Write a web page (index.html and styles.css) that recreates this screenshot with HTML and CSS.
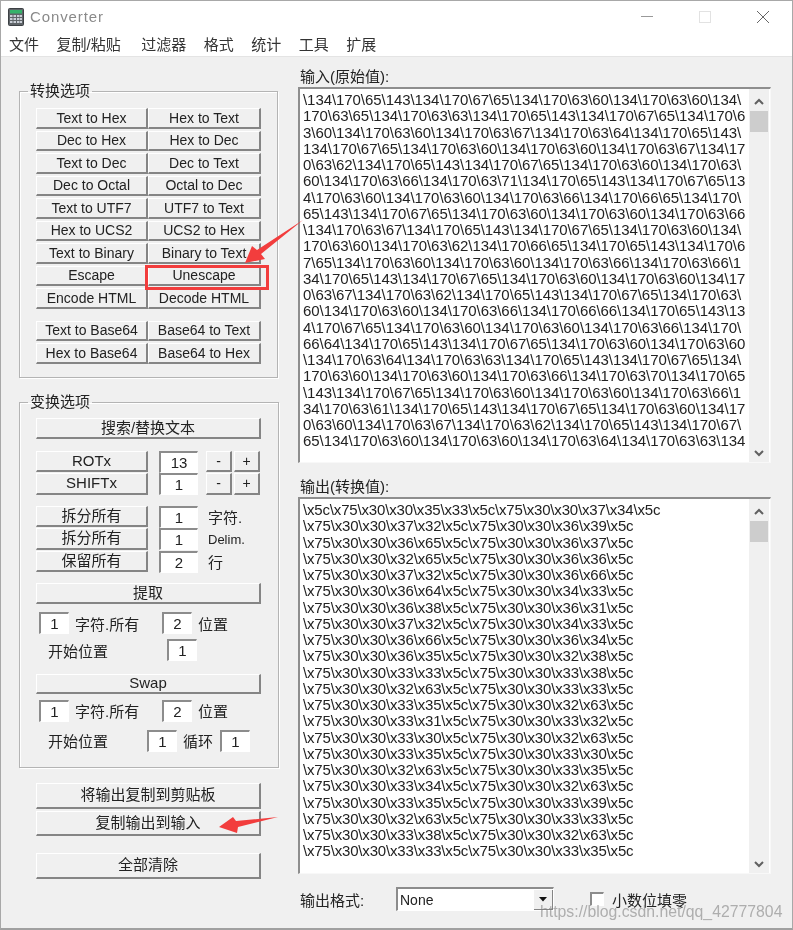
FILE: index.html
```html
<!DOCTYPE html>
<html lang="zh-CN">
<head>
  <meta charset="UTF-8" />
  <title>Converter</title>
  <link rel="stylesheet" href="styles.css">
</head>
<body>
  <div class="window">
    <div class="titlebar">
      <svg class="app-icon" width="16" height="18" viewBox="0 0 16 18">
        <rect x="0.5" y="0.5" width="15" height="17" rx="1" fill="#5f6468" stroke="#3c4044"/>
        <rect x="2" y="2" width="12" height="3.5" fill="#35b26a"/>
        <g fill="#c9ced6">
          <rect x="2" y="7" width="2.5" height="2"/><rect x="5.5" y="7" width="2.5" height="2"/><rect x="9" y="7" width="2.5" height="2"/><rect x="12" y="7" width="2" height="2"/>
          <rect x="2" y="10" width="2.5" height="2"/><rect x="5.5" y="10" width="2.5" height="2"/><rect x="9" y="10" width="2.5" height="2"/><rect x="12" y="10" width="2" height="2"/>
          <rect x="2" y="13" width="2.5" height="2"/><rect x="5.5" y="13" width="2.5" height="2"/><rect x="9" y="13" width="2.5" height="2"/><rect x="12" y="13" width="2" height="2"/>
        </g>
      </svg>
      <span class="title">Converter</span>
      <div class="caption-btns">
        <svg width="12" height="12" viewBox="0 0 12 12"><path d="M0 5.5H12" stroke="#999" fill="none"/></svg>
        <svg width="12" height="12" viewBox="0 0 12 12"><rect x="0.5" y="0.5" width="11" height="11" stroke="#e2e2e2" fill="none"/></svg>
        <svg width="12" height="12" viewBox="0 0 12 12"><path d="M0 0L12 12M12 0L0 12" stroke="#666" fill="none"/></svg>
      </div>
    </div>
    <div class="menubar">
      <span>文件</span><span class="menu-copy">复制/粘贴</span><span>过滤器</span><span>格式</span><span>统计</span><span>工具</span><span>扩展</span>
    </div>

    <div class="main">
      <div class="left">
        <fieldset class="group group-convert">
          <legend>转换选项</legend>
          <div class="btn-grid">
            <button>Text to Hex</button><button>Hex to Text</button>
            <button>Dec to Hex</button><button>Hex to Dec</button>
            <button>Text to Dec</button><button>Dec to Text</button>
            <button>Dec to Octal</button><button>Octal to Dec</button>
            <button>Text to UTF7</button><button>UTF7 to Text</button>
            <button>Hex to UCS2</button><button>UCS2 to Hex</button>
            <button>Text to Binary</button><button>Binary to Text</button>
            <button>Escape</button><button>Unescape</button>
            <button>Encode HTML</button><button>Decode HTML</button>
          </div>
          <div class="btn-grid grid-base64">
            <button>Text to Base64</button><button>Base64 to Text</button>
            <button>Hex to Base64</button><button>Base64 to Hex</button>
          </div>
        </fieldset>

        <fieldset class="group group-transform">
          <legend>变换选项</legend>
          <button class="wide">搜索/替换文本</button>

          <div class="rows rows-rot">
            <div class="row">
              <button class="half">ROTx</button>
              <input class="num" value="13">
              <button class="step">-</button><button class="step">+</button>
            </div>
            <div class="row">
              <button class="half">SHIFTx</button>
              <input class="num" value="1">
              <button class="step">-</button><button class="step">+</button>
            </div>
          </div>

          <div class="rows rows-split">
            <div class="row">
              <button class="half">拆分所有</button>
              <input class="num" value="1">
              <span class="row-label">字符.</span>
            </div>
            <div class="row">
              <button class="half">拆分所有</button>
              <input class="num" value="1">
              <span class="row-label label-delim">Delim.</span>
            </div>
            <div class="row">
              <button class="half">保留所有</button>
              <input class="num" value="2">
              <span class="row-label">行</span>
            </div>
          </div>

          <button class="wide btn-extract">提取</button>
          <div class="field-row first-row">
            <input class="small" value="1"><span class="lbl lbl-chars">字符.所有</span>
            <input class="small" value="2"><span class="lbl">位置</span>
          </div>
          <div class="field-row start-row">
            <span class="lbl-start">开始位置</span><input class="small" value="1">
          </div>

          <button class="wide btn-swap">Swap</button>
          <div class="field-row swap-row">
            <input class="small" value="1"><span class="lbl lbl-chars">字符.所有</span>
            <input class="small" value="2"><span class="lbl">位置</span>
          </div>
          <div class="field-row loop-row">
            <span class="lbl-start">开始位置</span><input class="small" value="1">
            <span class="lbl lbl-loop">循环</span><input class="small" value="1">
          </div>
        </fieldset>

        <div class="actions">
          <button class="wide tall">将输出复制到剪贴板</button>
          <button class="wide tall">复制输出到输入</button>
          <button class="wide tall clear-all">全部清除</button>
        </div>
      </div>

      <div class="right">
        <label class="box-label">输入(原始值):</label>
        <div class="textbox input-box">
<pre class="content">\134\170\65\143\134\170\67\65\134\170\63\60\134\170\63\60\134\
170\63\65\134\170\63\63\134\170\65\143\134\170\67\65\134\170\6
3\60\134\170\63\60\134\170\63\67\134\170\63\64\134\170\65\143\
134\170\67\65\134\170\63\60\134\170\63\60\134\170\63\67\134\17
0\63\62\134\170\65\143\134\170\67\65\134\170\63\60\134\170\63\
60\134\170\63\66\134\170\63\71\134\170\65\143\134\170\67\65\13
4\170\63\60\134\170\63\60\134\170\63\66\134\170\66\65\134\170\
65\143\134\170\67\65\134\170\63\60\134\170\63\60\134\170\63\66
\134\170\63\67\134\170\65\143\134\170\67\65\134\170\63\60\134\
170\63\60\134\170\63\62\134\170\66\65\134\170\65\143\134\170\6
7\65\134\170\63\60\134\170\63\60\134\170\63\66\134\170\63\66\1
34\170\65\143\134\170\67\65\134\170\63\60\134\170\63\60\134\17
0\63\67\134\170\63\62\134\170\65\143\134\170\67\65\134\170\63\
60\134\170\63\60\134\170\63\66\134\170\66\66\134\170\65\143\13
4\170\67\65\134\170\63\60\134\170\63\60\134\170\63\66\134\170\
66\64\134\170\65\143\134\170\67\65\134\170\63\60\134\170\63\60
\134\170\63\64\134\170\63\63\134\170\65\143\134\170\67\65\134\
170\63\60\134\170\63\60\134\170\63\66\134\170\63\70\134\170\65
\143\134\170\67\65\134\170\63\60\134\170\63\60\134\170\63\66\1
34\170\63\61\134\170\65\143\134\170\67\65\134\170\63\60\134\17
0\63\60\134\170\63\67\134\170\63\62\134\170\65\143\134\170\67\
65\134\170\63\60\134\170\63\60\134\170\63\64\134\170\63\63\134</pre>
          <div class="scrollbar">
            <svg class="chevron" width="12" height="8" viewBox="0 0 12 8"><path d="M2 6L6 2L10 6" stroke="#606060" stroke-width="2" fill="none"/></svg>
            <div class="thumb"></div>
            <svg class="chevron chevron-down" width="12" height="8" viewBox="0 0 12 8"><path d="M2 2L6 6L10 2" stroke="#606060" stroke-width="2" fill="none"/></svg>
          </div>
        </div>

        <label class="box-label output-label">输出(转换值):</label>
        <div class="textbox output-box">
<pre class="content">\x5c\x75\x30\x30\x35\x33\x5c\x75\x30\x30\x37\x34\x5c
\x75\x30\x30\x37\x32\x5c\x75\x30\x30\x36\x39\x5c
\x75\x30\x30\x36\x65\x5c\x75\x30\x30\x36\x37\x5c
\x75\x30\x30\x32\x65\x5c\x75\x30\x30\x36\x36\x5c
\x75\x30\x30\x37\x32\x5c\x75\x30\x30\x36\x66\x5c
\x75\x30\x30\x36\x64\x5c\x75\x30\x30\x34\x33\x5c
\x75\x30\x30\x36\x38\x5c\x75\x30\x30\x36\x31\x5c
\x75\x30\x30\x37\x32\x5c\x75\x30\x30\x34\x33\x5c
\x75\x30\x30\x36\x66\x5c\x75\x30\x30\x36\x34\x5c
\x75\x30\x30\x36\x35\x5c\x75\x30\x30\x32\x38\x5c
\x75\x30\x30\x33\x33\x5c\x75\x30\x30\x33\x38\x5c
\x75\x30\x30\x32\x63\x5c\x75\x30\x30\x33\x33\x5c
\x75\x30\x30\x33\x35\x5c\x75\x30\x30\x32\x63\x5c
\x75\x30\x30\x33\x31\x5c\x75\x30\x30\x33\x32\x5c
\x75\x30\x30\x33\x30\x5c\x75\x30\x30\x32\x63\x5c
\x75\x30\x30\x33\x35\x5c\x75\x30\x30\x33\x30\x5c
\x75\x30\x30\x32\x63\x5c\x75\x30\x30\x33\x35\x5c
\x75\x30\x30\x33\x34\x5c\x75\x30\x30\x32\x63\x5c
\x75\x30\x30\x33\x35\x5c\x75\x30\x30\x33\x39\x5c
\x75\x30\x30\x32\x63\x5c\x75\x30\x30\x33\x33\x5c
\x75\x30\x30\x33\x38\x5c\x75\x30\x30\x32\x63\x5c
\x75\x30\x30\x33\x33\x5c\x75\x30\x30\x33\x35\x5c</pre>
          <div class="scrollbar">
            <svg class="chevron" width="12" height="8" viewBox="0 0 12 8"><path d="M2 6L6 2L10 6" stroke="#606060" stroke-width="2" fill="none"/></svg>
            <div class="thumb"></div>
            <svg class="chevron chevron-down" width="12" height="8" viewBox="0 0 12 8"><path d="M2 2L6 6L10 2" stroke="#606060" stroke-width="2" fill="none"/></svg>
          </div>
        </div>

        <div class="format-row">
          <span class="format-label">输出格式:</span>
          <div class="select">
            <span class="select-value">None</span>
            <span class="select-arrow"><svg width="10" height="6" viewBox="0 0 10 6"><path d="M1 1H9L5 5.5Z" fill="#111"/></svg></span>
          </div>
          <span class="checkbox"></span>
          <span class="check-label">小数位填零</span>
        </div>
      </div>
    </div>

    <!-- annotations drawn on top of the screenshot -->
    <svg class="marks" width="793" height="930" viewBox="0 0 793 930">
      <rect x="146.5" y="266.5" width="121" height="22" fill="none" stroke="#f23d3d" stroke-width="3"/>
      <path d="M303 220L261 254L265 259L245 263L252 246L257 250Z" fill="#f23d3d"/>
      <path d="M278 817L236 821L233 817L219 827L237 833L238 827Z" fill="#f23d3d"/>
    </svg>
    <div class="watermark">https://blog.csdn.net/qq_42777804</div>
  </div>
</body>
</html>
```

FILE: styles.css
```css
* {
  box-sizing: border-box;
}
html, body {
  margin: 0;
  padding: 0;
}
body {
  width: 793px;
  height: 930px;
  overflow: hidden;
  font-family: "Liberation Sans", "Noto Sans CJK SC", sans-serif;
  font-size: 14px;
  color: #222;
}
.window {
  position: relative;
  width: 793px;
  height: 930px;
  background: #f0f0f0;
  border: 1px solid #a8a8a8;
  border-bottom: 2px solid #a0a0a0;
  overflow: hidden;
  filter: blur(0.3px);
}
.titlebar {
  display: flex;
  align-items: center;
  height: 31px;
  padding-left: 7px;
  background: #fff;
}
.app-icon {
  flex: none;
}
.title {
  margin-left: 6px;
  font-size: 15px;
  letter-spacing: 0.9px;
  color: #8a8a8a;
}
.caption-btns {
  display: flex;
  gap: 46px;
  margin-left: auto;
  margin-right: 23px;
}
.menubar {
  display: flex;
  gap: 17.5px;
  height: 25px;
  padding: 2px 0 0 8px;
  background: #fff;
  border-bottom: 1px solid #e4e4e4;
  font-size: 15px;
  line-height: 22px;
  color: #333;
}
.menu-copy {
  margin-right: 3px;
}
.main {
  display: flex;
}
.left {
  flex: none;
  width: 297px;
  padding: 26px 0 0 18px;
}
.group {
  width: 259px;
  margin: 0;
  padding: 8px 16px 0 16px;
  border: 1px solid #b4b4b4;
  box-shadow: 1px 1px 0 #fff, inset 1px 1px 0 #fff;
}
.group legend {
  padding: 0 2px;
  margin-left: -8px;
  font-size: 15px;
  line-height: 16px;
}
button {
  display: block;
  padding: 0;
  height: 20.5px;
  background: #f0f0f0;
  border: 1px solid #fff;
  border-right: 2px solid #858585;
  border-bottom: 2px solid #858585;
  border-radius: 0;
  font-family: inherit;
  font-size: 14px;
  line-height: 16px;
  color: #222;
}
.btn-grid {
  display: grid;
  grid-template-columns: 112px 113px;
  grid-auto-rows: 20.5px;
  row-gap: 2px;
}
.grid-base64 {
  margin-top: 12px;
}
.group-convert {
  height: 295px;
  padding-top: 9px;
}
.group-transform {
  height: 374px;
  margin-top: 16px;
}
.wide {
  width: 225px;
  font-size: 15px;
}
.half {
  flex: none;
  width: 112px;
  height: 21.5px;
  font-size: 15px;
}
.rows {
  display: flex;
  flex-direction: column;
}
.row {
  display: flex;
  align-items: flex-start;
  height: 22.5px;
}
.rows-rot {
  margin-top: 12px;
}
.rows-split {
  margin-top: 10px;
}
input {
  display: block;
  padding: 0;
  background: #fff;
  border-style: solid;
  border-width: 2px 1px 1px 2px;
  border-color: #8c8c8c #fff #fff #8c8c8c;
  outline: none;
  border-radius: 0;
  text-align: center;
  font-family: inherit;
  font-size: 15px;
  color: #222;
}
.num {
  flex: none;
  width: 39px;
  height: 22px;
  margin-left: 11px;
}
.step {
  flex: none;
  width: 26px;
  height: 21.5px;
  margin-right: 2px;
  font-size: 14px;
}
.num + .step {
  margin-left: 8px;
}
.row-label {
  margin-left: 10px;
  font-size: 15px;
  line-height: 24px;
}
.label-delim {
  font-size: 13px;
}
.btn-extract {
  margin-top: 10px;
}
.field-row {
  display: flex;
  align-items: center;
  height: 21px;
}
.small {
  flex: none;
  width: 30px;
  height: 22px;
}
.lbl {
  margin-left: 6px;
  font-size: 15px;
}
.lbl-chars {
  width: 87px;
}
.lbl-loop {
  width: 37px;
}
.lbl-start {
  flex: none;
  padding-left: 12px;
  font-size: 15px;
}
.first-row {
  margin: 9px 0 0 3px;
}
.start-row {
  margin-top: 6px;
}
.start-row .lbl-start {
  width: 131px;
}
.btn-swap {
  margin-top: 13px;
}
.swap-row {
  margin: 6px 0 0 3px;
}
.loop-row {
  margin-top: 9px;
}
.loop-row .lbl-start {
  width: 111px;
}
.actions {
  margin: 15px 0 0 17px;
}
.tall {
  height: 25.5px;
  margin-bottom: 2px;
}
.clear-all {
  margin-top: 17px;
}
.right {
  flex: none;
  width: 473px;
  padding-top: 11px;
}
.box-label {
  display: block;
  padding-left: 2px;
  font-size: 15px;
  line-height: 18px;
  height: 19px;
}
.textbox {
  display: flex;
  height: 376px;
  background: #fff;
  border-style: solid;
  border-width: 2px 1px 1px 2px;
  border-color: #8e8e8e #f8f8f8 #f8f8f8 #8e8e8e;
}
.content {
  flex: 1;
  margin: 0;
  padding: 3px 0 0 3px;
  font-family: inherit;
  font-size: 15px;
  line-height: 16.25px;
  color: #222;
  overflow: hidden;
}
.input-box .content {
  letter-spacing: -0.065px;
}
.output-box .content {
  letter-spacing: -0.17px;
}
.scrollbar {
  display: flex;
  flex: none;
  flex-direction: column;
  align-items: center;
  width: 20px;
  margin-right: 1px;
  padding-top: 9px;
  background: #f0f0f0;
}
.thumb {
  width: 18px;
  height: 21px;
  margin-top: 5px;
  background: #cdcdcd;
}
.chevron {
  display: block;
  flex: none;
}
.chevron-down {
  margin-top: auto;
  margin-bottom: 5px;
}
.output-label {
  margin-top: 15px;
}
.output-box {
  height: 377px;
}
.format-row {
  display: flex;
  align-items: center;
  height: 24px;
  margin-top: 13px;
  padding-left: 2px;
  font-size: 15px;
}
.format-label {
  width: 96px;
}
.select {
  display: flex;
  align-items: center;
  justify-content: space-between;
  width: 158px;
  height: 24px;
  background: #fff;
  border-style: solid;
  border-width: 2px 1px 1px 2px;
  border-color: #8c8c8c #fff #fff #8c8c8c;
}
.select-value {
  padding-left: 2px;
  font-size: 14px;
}
.select-arrow {
  display: flex;
  align-items: center;
  justify-content: center;
  width: 19px;
  height: 20px;
  background: #f0f0f0;
  border-right: 1px solid #858585;
  border-bottom: 1px solid #858585;
}
.checkbox {
  width: 14px;
  height: 14px;
  margin-left: 36px;
  background: #fff;
  border-style: solid;
  border-width: 2px 1px 1px 2px;
  border-color: #8c8c8c #fff #fff #8c8c8c;
}
.check-label {
  margin-left: 8px;
}
.marks {
  position: absolute;
  left: -1px;
  top: -1px;
  pointer-events: none;
}
.watermark {
  position: absolute;
  left: 539px;
  top: 902px;
  font-size: 15.8px;
  line-height: 17px;
  color: rgba(130, 130, 130, 0.6);
  white-space: nowrap;
}
```
